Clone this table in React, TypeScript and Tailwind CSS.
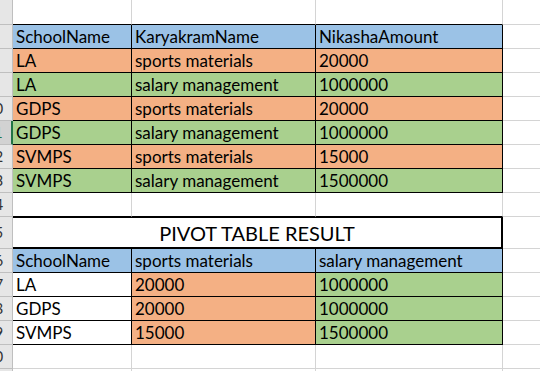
import React from "react";

const BLUE = "bg-[#9bc2e6]";
const ORANGE = "bg-[#f4b084]";
const GREEN = "bg-[#a9d08e]";
const WHITE = "bg-white";

const RB = "border-r border-r-black";
const BB = "border-b border-b-black";
const RG = "border-r border-r-[#d4d4d4]";
const BG = "border-b border-b-[#d4d4d4]";

const WA = "w-[119px] shrink-0";
const WB = "w-[184px] shrink-0";
const WC = "w-[187px] shrink-0";
const WD = "flex-1";

const TXT =
  "flex items-end pl-[3px] pb-[3px] text-[17px] leading-none whitespace-nowrap text-black";

function Hdr({ n, sel }: { n: number; sel?: boolean }) {
  return (
    <div
      className={
        sel
          ? "w-[13px] shrink-0 overflow-hidden flex justify-end items-center bg-[#d2d2d2] border-r-2 border-r-[#217346] border-b border-b-[#bfbfbf] text-[#217346]"
          : "w-[13px] shrink-0 overflow-hidden flex justify-end items-center bg-[#e6e6e6] border-r border-r-[#bfbfbf] border-b border-b-[#bfbfbf] text-[#333333]"
      }
    >
      <div
        className={
          sel
            ? "w-[34px] shrink-0 flex justify-center text-[15px] leading-none"
            : "w-[35px] shrink-0 flex justify-center text-[15px] leading-none"
        }
      >
        {n}
      </div>
    </div>
  );
}

function Cell({
  w,
  bg,
  br,
  bb,
  t,
}: {
  w: string;
  bg: string;
  br: string;
  bb: string;
  t?: string;
}) {
  return <div className={`${w} ${bg} ${br} ${bb} ${TXT}`}>{t}</div>;
}

function DataRow({
  n,
  a,
  b,
  c,
  bgA,
  bgB,
  bgC,
  sel,
}: {
  n: number;
  a: string;
  b: string;
  c: string;
  bgA: string;
  bgB: string;
  bgC: string;
  sel?: boolean;
}) {
  return (
    <div className="flex h-[24px] shrink-0">
      <Hdr n={n} sel={sel} />
      <Cell w={WA} bg={bgA} br={RB} bb={BB} t={a} />
      <Cell w={WB} bg={bgB} br={RB} bb={BB} t={b} />
      <Cell w={WC} bg={bgC} br={RB} bb={BB} t={c} />
      <Cell w={WD} bg={WHITE} br="" bb={BG} />
    </div>
  );
}

function EmptyRow({ n, h, bottomBlack }: { n: number; h: string; bottomBlack?: boolean }) {
  const bb = bottomBlack ? BB : BG;
  return (
    <div className={`flex ${h}`}>
      <Hdr n={n} />
      <Cell w={WA} bg={WHITE} br={RG} bb={bb} />
      <Cell w={WB} bg={WHITE} br={RG} bb={bb} />
      <Cell w={WC} bg={WHITE} br={RG} bb={bb} />
      <Cell w={WD} bg={WHITE} br="" bb={BG} />
    </div>
  );
}

export default function App() {
  return (
    <div className="w-[540px] h-[371px] overflow-hidden bg-white font-['Lato','Noto_Sans',sans-serif] flex flex-col">
      <EmptyRow n={6} h="h-[25px] shrink-0" bottomBlack />
      <DataRow n={7} a="SchoolName" b="KaryakramName" c="NikashaAmount" bgA={BLUE} bgB={BLUE} bgC={BLUE} />
      <DataRow n={8} a="LA" b="sports materials" c="20000" bgA={ORANGE} bgB={ORANGE} bgC={ORANGE} />
      <DataRow n={9} a="LA" b="salary management" c="1000000" bgA={GREEN} bgB={GREEN} bgC={GREEN} />
      <DataRow n={10} a="GDPS" b="sports materials" c="20000" bgA={ORANGE} bgB={ORANGE} bgC={ORANGE} />
      <DataRow n={11} a="GDPS" b="salary management" c="1000000" bgA={GREEN} bgB={GREEN} bgC={GREEN} sel />
      <DataRow n={12} a="SVMPS" b="sports materials" c="15000" bgA={ORANGE} bgB={ORANGE} bgC={ORANGE} />
      <DataRow n={13} a="SVMPS" b="salary management" c="1500000" bgA={GREEN} bgB={GREEN} bgC={GREEN} />
      <EmptyRow n={14} h="h-[24px] shrink-0" bottomBlack />
      <div className="flex h-[32px] shrink-0">
        <Hdr n={15} />
        <div className="w-[490px] shrink-0 bg-white border-t border-t-black border-b-2 border-b-black border-r-2 border-r-black flex items-end justify-center pb-[4px] text-[20px] leading-none text-black whitespace-nowrap">
          PIVOT TABLE RESULT
        </div>
        <Cell w={WD} bg={WHITE} br="" bb={BG} />
      </div>
      <DataRow n={16} a="SchoolName" b="sports materials" c="salary management" bgA={BLUE} bgB={BLUE} bgC={BLUE} />
      <DataRow n={17} a="LA" b="20000" c="1000000" bgA={WHITE} bgB={ORANGE} bgC={GREEN} />
      <DataRow n={18} a="GDPS" b="20000" c="1000000" bgA={WHITE} bgB={ORANGE} bgC={GREEN} />
      <DataRow n={19} a="SVMPS" b="15000" c="1500000" bgA={WHITE} bgB={ORANGE} bgC={GREEN} />
      <EmptyRow n={20} h="h-[24px] shrink-0" />
      <EmptyRow n={21} h="h-[24px] shrink-0" />
    </div>
  );
}
